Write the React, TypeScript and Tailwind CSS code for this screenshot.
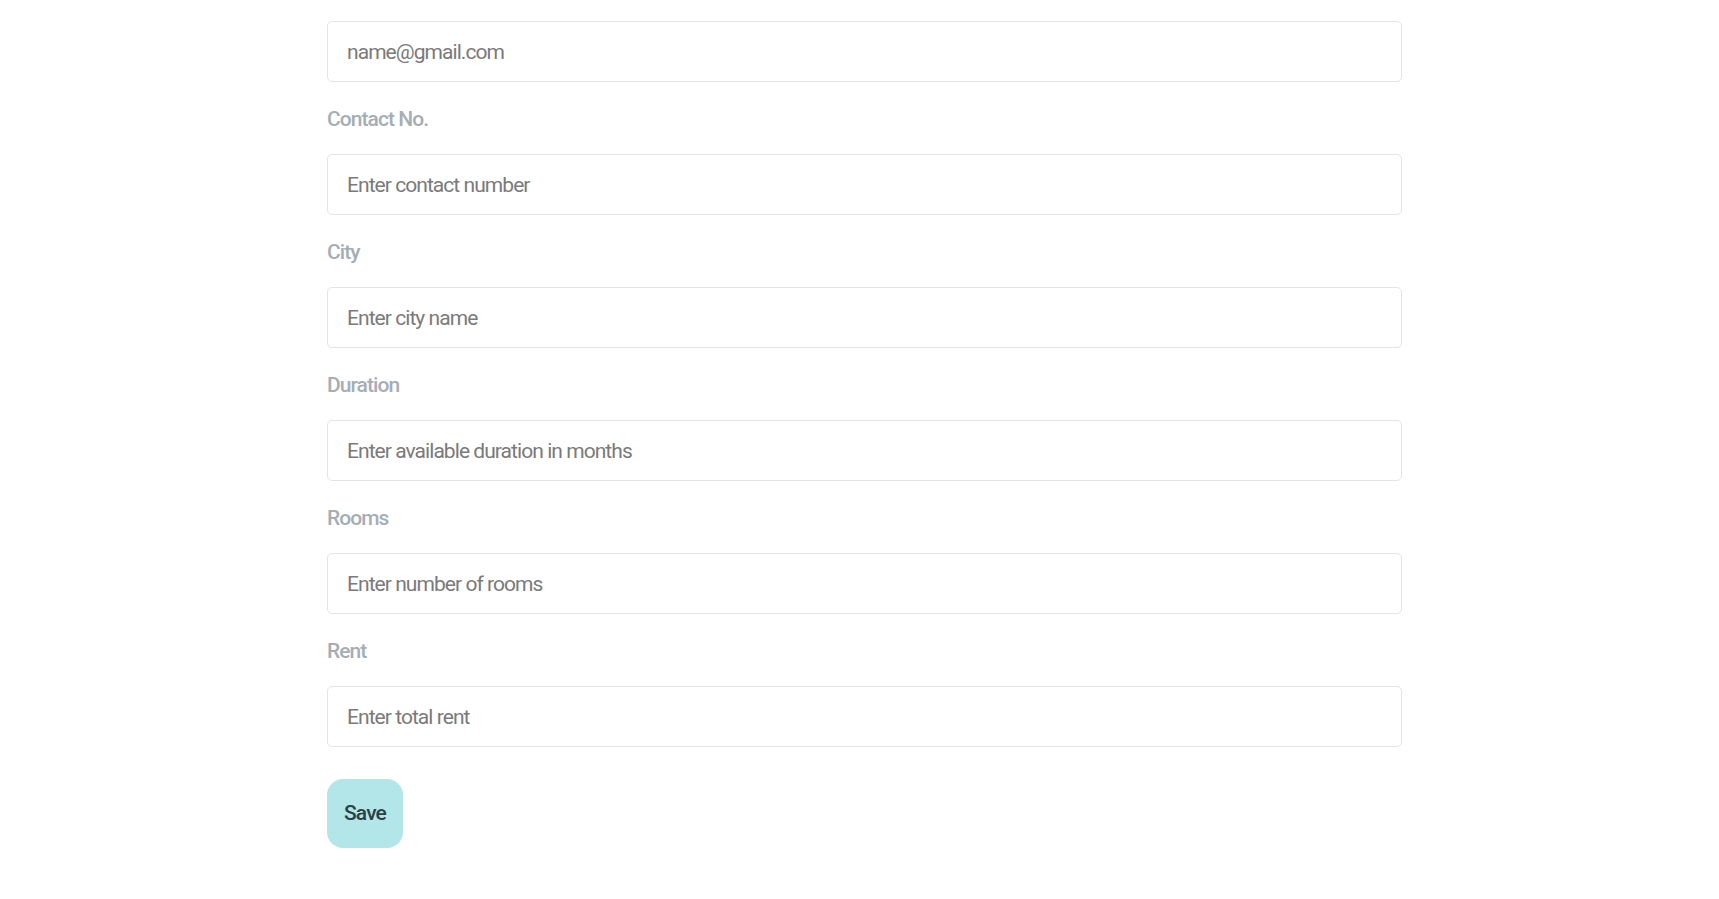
import React from "react";

const fields = [
  { label: "Contact No.", placeholder: "Enter contact number" },
  { label: "City", placeholder: "Enter city name" },
  { label: "Duration", placeholder: "Enter available duration in months" },
  { label: "Rooms", placeholder: "Enter number of rooms" },
  { label: "Rent", placeholder: "Enter total rent" },
];

const font = "font-['Roboto',sans-serif]";

const Input: React.FC<{ placeholder: string }> = ({ placeholder }) => (
  <input
    type="text"
    placeholder={placeholder}
    className={`block h-[61px] w-full rounded-[5px] border border-[#e4e4e4] bg-white pl-[19px] text-[21px] tracking-[-0.045em] text-[#444] outline-none placeholder:text-[#7a7a7a] ${font}`}
  />
);

export default function App() {
  return (
    <div className={`min-h-[899px] w-full bg-white pt-[21px] ${font}`}>
      <form className="ml-[327px] w-[1075px]" onSubmit={(e) => e.preventDefault()}>
        <Input placeholder="name@gmail.com" />
        {fields.map((f) => (
          <div key={f.label}>
            <label className="mt-[24px] mb-[20px] flex h-[28px] items-center text-[21px] font-medium tracking-[-0.045em] text-[#a5adb5]">
              {f.label}
            </label>
            <Input placeholder={f.placeholder} />
          </div>
        ))}
        <button
          type="submit"
          className="mt-[32px] h-[69px] w-[76px] rounded-[16px] bg-[#b3e6e8] text-[21px] font-medium tracking-[-0.04em] text-[#2c3f47]"
        >
          Save
        </button>
      </form>
    </div>
  );
}
